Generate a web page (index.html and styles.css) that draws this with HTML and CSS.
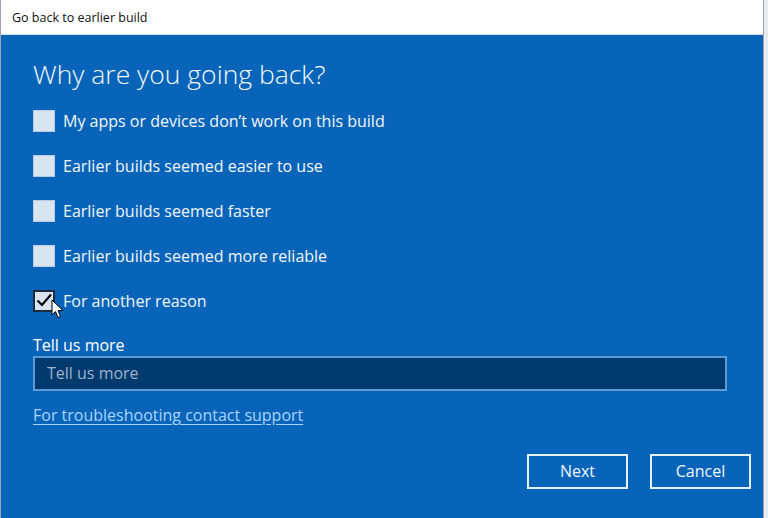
FILE: index.html
```html
<!DOCTYPE html>
<html>
<head>
<meta charset="utf-8">
<link rel="stylesheet" href="styles.css">
</head>
<body>
<div class="window">
  <div class="titlebar">Go back to earlier build</div>
  <div class="content">
    <h1 class="heading">Why are you going back?</h1>
    <div class="options">
      <label class="option"><span class="box"></span><span class="label">My apps or devices don’t work on this build</span></label>
      <label class="option"><span class="box"></span><span class="label">Earlier builds seemed easier to use</span></label>
      <label class="option"><span class="box"></span><span class="label">Earlier builds seemed faster</span></label>
      <label class="option"><span class="box"></span><span class="label">Earlier builds seemed more reliable</span></label>
      <label class="option checked">
        <span class="box">
          <svg class="check" viewBox="0 0 20 20" width="20" height="20"><path d="M3.5 10.5 L8 15 L17 4.5" fill="none" stroke="#000" stroke-width="2.2"/></svg>
          <svg class="cursor" viewBox="0 0 13 21" width="13" height="21"><path d="M1 1 L1 16 L4.5 12.5 L7 18.5 L9.5 17.5 L7 11.5 L12 11.5 Z" fill="#fff" stroke="#000" stroke-width="1" stroke-linejoin="round"/></svg>
        </span>
        <span class="label">For another reason</span>
      </label>
    </div>
    <div class="field-label">Tell us more</div>
    <div class="textbox">Tell us more</div>
    <a class="link" href="#">For troubleshooting contact support</a>
    <div class="buttons">
      <div class="btn">Next</div>
      <div class="btn">Cancel</div>
    </div>
  </div>
</div>
<div class="edge"></div>
</body>
</html>
```
FILE: styles.css
```css
html, body {
  margin: 0;
  padding: 0;
  width: 768px;
  height: 518px;
  overflow: hidden;
}
body {
  background: #e9ecef;
  display: flex;
  font-family: "Open Sans", "Noto Sans", sans-serif;
}
.window {
  width: 764px;
  height: 518px;
  display: flex;
  flex-direction: column;
  border-left: 1px solid #9aa3ad;
  border-right: 1px solid #9aa3ad;
  box-sizing: border-box;
}
.titlebar {
  height: 35px;
  background: #ffffff;
  color: #111;
  font-size: 12.5px;
  padding-left: 11px;
  line-height: 35px;
  border-bottom: 1px solid #d8dee6;
  box-sizing: border-box;
  flex: none;
}
.content {
  flex: 1;
  background: #0864b8;
  color: #fff;
  padding: 22px 12px 0 32px;
  display: flex;
  flex-direction: column;
}
.heading {
  margin: 0;
  font-weight: 300;
  font-size: 26.5px;
  line-height: 34px;
  color: #f4f8fc;
}
.options {
  display: flex;
  flex-direction: column;
  margin-top: 8px;
}
.option {
  height: 44.8px;
  display: flex;
  align-items: center;
  gap: 8px;
}
.box {
  position: relative;
  width: 20px;
  height: 20px;
  background: #d9e4f1;
  border: 1px solid #b7cbe2;
  flex: none;
}
.checked .box {
  border: 2px solid #1d2b3a;
  width: 18px;
  height: 18px;
}
.check {
  position: absolute;
  left: -1px;
  top: -2px;
}
.cursor {
  position: absolute;
  left: 16px;
  top: 7px;
}
.label {
  font-size: 16px;
  color: #f2f6fb;
}
.field-label {
  font-size: 16px;
  margin-top: 11px;
  line-height: 22px;
}
.textbox {
  margin-top: 0;
  width: 694px;
  height: 35px;
  box-sizing: border-box;
  background: #003a6f;
  border: 2px solid #5b9bd8;
  color: #9fb3c8;
  font-size: 16px;
  line-height: 31px;
  padding-left: 12px;
}
.link {
  margin-top: 13px;
  align-self: flex-start;
  color: #a8d4ff;
  font-size: 16px;
  line-height: 22px;
  text-decoration: underline;
  text-underline-offset: 3px;
}
.buttons {
  margin-top: auto;
  margin-bottom: 29px;
  display: flex;
  justify-content: flex-end;
  gap: 22px;
}
.btn {
  width: 101px;
  height: 35px;
  box-sizing: border-box;
  border: 2px solid #e6f0fa;
  text-align: center;
  line-height: 31px;
  font-size: 16px;
  color: #f2f6fb;
}
.edge {
  flex: 1;
  background: #e9ecef;
}
```
